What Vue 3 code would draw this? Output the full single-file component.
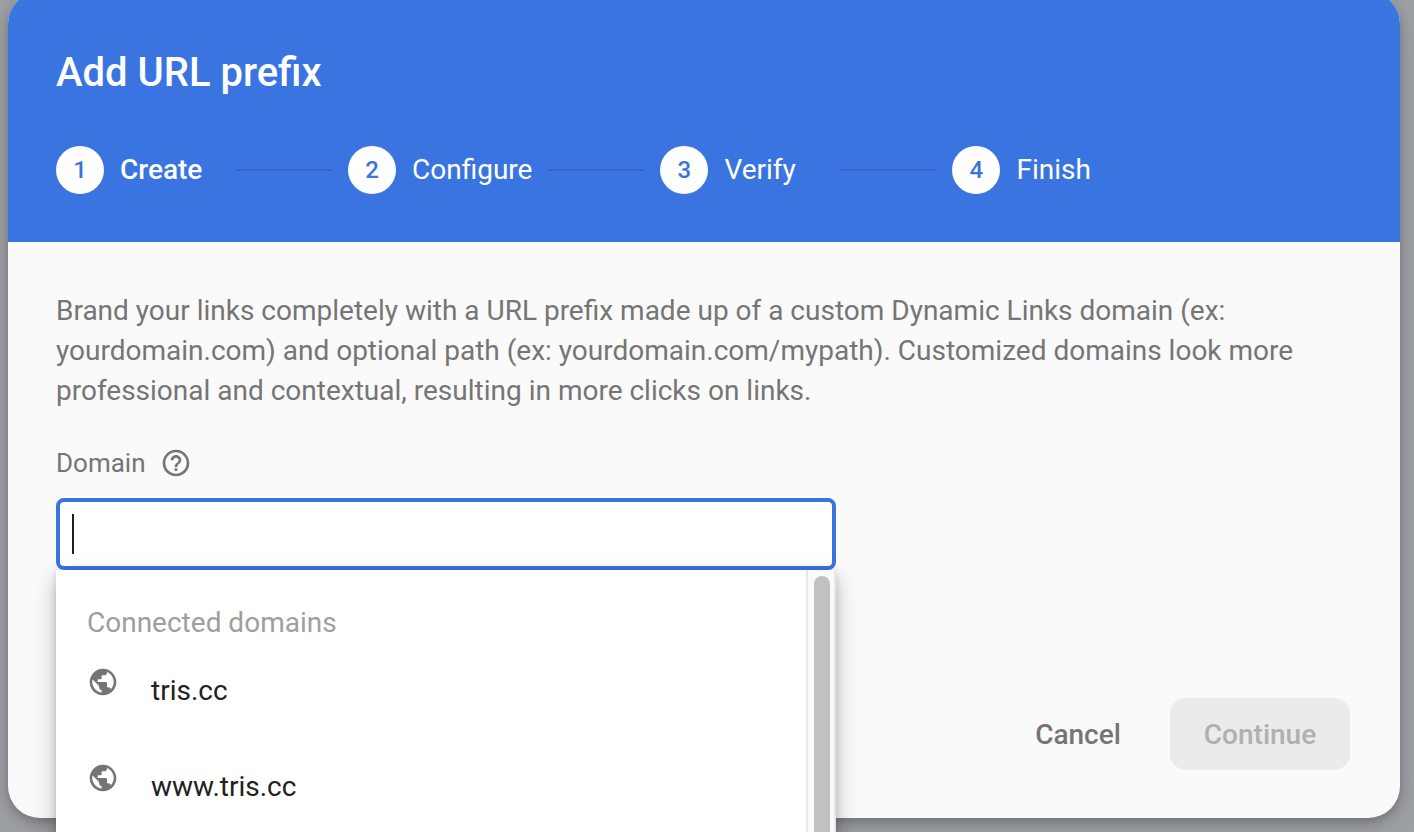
<template>
  <div class="backdrop">
    <section class="dialog" role="dialog" aria-labelledby="dialog-title">
      <header class="dialog-header">
        <h1 id="dialog-title">Add URL prefix</h1>
        <ol class="stepper">
          <template v-for="(step, index) in steps" :key="step">
            <li v-if="index > 0" class="step-line" aria-hidden="true"></li>
            <li class="step" :class="{ active: index === currentStep }">
              <span class="step-number">{{ index + 1 }}</span>
              <span>{{ step }}</span>
            </li>
          </template>
        </ol>
      </header>

      <form class="dialog-body" @submit.prevent="nextStep">
        <p class="intro">
          Brand your links completely with a URL prefix made up of a custom Dynamic Links domain (ex:
          yourdomain.com) and optional path (ex: yourdomain.com/mypath). Customized domains look more
          professional and contextual, resulting in more clicks on links.
        </p>

        <div class="field-label">
          <label for="domain">Domain</label>
          <button type="button" class="help" aria-label="Help">
            <svg viewBox="0 0 24 24">
              <path d="M11 18h2v-2h-2v2zm1-16C6.48 2 2 6.48 2 12s4.48 10 10 10 10-4.48 10-10S17.52 2 12 2zm0 18c-4.41 0-8-3.59-8-8s3.59-8 8-8 8 3.59 8 8-3.59 8-8 8zm0-14c-2.21 0-4 1.79-4 4h2c0-1.1.9-2 2-2s2 .9 2 2c0 2-3 1.75-3 5h2c0-2.25 3-2.5 3-5 0-2.21-1.79-4-4-4z" />
            </svg>
          </button>
        </div>

        <div class="field">
          <input id="domain" v-model="domain" type="text" autocomplete="off" @focus="menuOpen = true" />
          <span v-if="!domain" class="caret"></span>
          <div v-if="menuOpen" class="menu">
            <div class="menu-content">
              <h2>Connected domains</h2>
              <button v-for="item in connectedDomains" :key="item" type="button" class="option" @click="selectDomain(item)">
                <svg viewBox="0 0 24 24">
                  <path d="M12 2C6.48 2 2 6.48 2 12s4.48 10 10 10 10-4.48 10-10S17.52 2 12 2zm-1 17.93c-3.95-.49-7-3.85-7-7.93 0-.62.08-1.21.21-1.79L9 15v1c0 1.1.9 2 2 2v1.93zm6.9-2.54c-.26-.81-1-1.39-1.9-1.39h-1v-3c0-.55-.45-1-1-1H8v-2h2c.55 0 1-.45 1-1V7h2c1.1 0 2-.9 2-2v-.41c2.93 1.19 5 4.06 5 7.41 0 2.08-.8 3.97-2.1 5.39z" />
                </svg>
                <span>{{ item }}</span>
              </button>
            </div>
            <div class="scroll-track"><div class="scroll-thumb"></div></div>
          </div>
        </div>

        <div class="dialog-actions">
          <button type="button" class="cancel" @click="menuOpen = false">Cancel</button>
          <button type="submit" class="continue" :disabled="!domain">Continue</button>
        </div>
      </form>
    </section>
  </div>
</template>

<script setup>
import { ref } from 'vue'

const steps = ['Create', 'Configure', 'Verify', 'Finish']
const connectedDomains = ['tris.cc', 'www.tris.cc']

const currentStep = ref(0)
const domain = ref('')
const menuOpen = ref(true)

function selectDomain(item) {
  domain.value = item
  menuOpen.value = false
}

function nextStep() {
  if (currentStep.value < steps.length - 1) currentStep.value += 1
}
</script>

<style>
body { margin: 0; }
</style>

<style scoped>
.backdrop { display: flex; height: 100vh; overflow: hidden; background: #9da0a4; color: #757575; font-family: Roboto, "Liberation Sans", sans-serif; font-size: 28px; line-height: 40px; }
.dialog { display: flex; flex: 1; min-width: 0; flex-direction: column; margin: -8px 14px 14px 8px; border-radius: 32px; background: #fafafa; box-shadow: 0 4px 10px rgba(0, 0, 0, .2), 0 8px 28px rgba(0, 0, 0, .12); }
.dialog-header { padding: 57px 48px 48px; border-radius: 32px 32px 0 0; background: #3a74e0; color: white; }
h1 { margin: 0 0 49px; font-size: 40px; font-weight: 500; line-height: 48px; }
.stepper { display: flex; align-items: center; gap: 16px; margin: 0; padding: 0; list-style: none; }
.step { display: flex; align-items: center; gap: 16px; min-width: 164px; }
.step.active { font-weight: 500; }
.step-number { display: grid; place-items: center; width: 48px; height: 48px; border-radius: 50%; background: white; color: #3a74e0; font-size: 24px; font-weight: 500; }
.step-line { width: 96px; height: 2px; background: #3168c9; }
.dialog-body { display: flex; flex: 1; flex-direction: column; padding: 49px 50px 48px 48px; }
.intro { max-width: 1260px; margin: 0 0 32px; }
.field-label { display: flex; align-items: center; gap: 14px; margin-bottom: 15px; font-size: 26px; }
.help { width: 32px; height: 32px; padding: 0; border: 0; background: none; color: inherit; cursor: pointer; }
svg { display: block; flex: none; width: 32px; height: 32px; fill: #757575; }
.field { position: relative; width: 780px; max-width: 100%; }
input { display: block; box-sizing: border-box; width: 100%; height: 72px; padding: 0 12px; border: 4px solid #3a74e0; border-radius: 8px; outline: none; background: white; color: #212121; font: inherit; caret-color: transparent; }
.caret { position: absolute; top: 16px; left: 16px; width: 2px; height: 40px; background: #212121; }
.menu { position: absolute; top: 100%; left: 0; display: flex; width: 100%; height: 400px; background: white; box-shadow: 0 8px 20px rgba(0, 0, 0, .28), 0 2px 6px rgba(0, 0, 0, .12); }
.menu-content { flex: 1; padding-top: 33px; }
h2 { margin: 0; padding: 0 31px; color: #9e9e9e; font-size: 28px; font-weight: 400; }
.option { display: flex; align-items: flex-start; gap: 32px; width: 100%; height: 96px; padding: 23px 31px 0; border: 0; background: none; color: #212121; font: inherit; line-height: 50px; text-align: left; cursor: pointer; }
.scroll-track { width: 16px; padding: 6px 4px 0 6px; border: solid #e8e8e8; border-width: 0 2px; background: #fafafa; }
.scroll-thumb { height: 380px; border-radius: 8px; background: #c1c1c1; }
.dialog-actions { display: flex; justify-content: flex-end; gap: 32px; margin-top: auto; }
.dialog-actions button { height: 72px; padding: 2px 16px 0; border: 0; border-radius: 16px; font: inherit; font-weight: 500; cursor: pointer; }
.cancel { min-width: 120px; background: none; color: #757575; }
.continue { min-width: 180px; background: #3a74e0; color: white; }
.continue:disabled { background: #ebebeb; color: #b0b0b0; cursor: default; }
@media (max-width: 1100px) { .stepper { flex-wrap: wrap; } }
</style>
